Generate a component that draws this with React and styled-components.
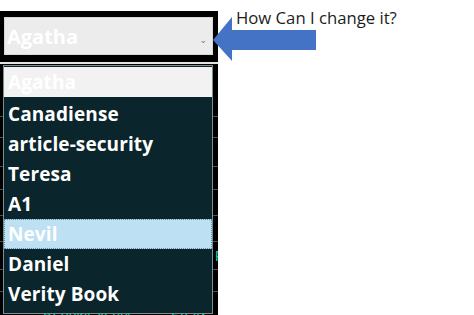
import { createGlobalStyle, styled } from "styled-components"

const GlobalStyle = createGlobalStyle`
  html, body {
    margin: 0;
    padding: 0;
    background: #fff;
  }
`

const options = [
  "Agatha",
  "Canadiense",
  "article-security",
  "Teresa",
  "A1",
  "Nevil",
  "Daniel",
  "Verity Book",
]

const rowHeights = [53, 21, 29, 23, 26, 26, 28, 22]

export default function App() {
  return (
    <>
      <GlobalStyle />
      <Page>
        <LeftCol>
          <SelectFrame>
            <SelectBox>
              <SelectValue>Agatha</SelectValue>
              <Chevron>⌄</Chevron>
            </SelectBox>
          </SelectFrame>
          <Rule />
          <Panel>
            {rowHeights.map((h, i) => (
              <TableRow key={i} $h={h}>
                {i === 6 && <TealText $right>F</TealText>}
              </TableRow>
            ))}
            <BottomRow>
              <Dash />
              <TealText>Regular Verity</TealText>
              <Dash />
              <TealText>Prefix</TealText>
            </BottomRow>
            <Dropdown>
              {options.map((name, i) => (
                <Option key={name} $first={i === 0} $active={name === "Nevil"}>
                  {name}
                </Option>
              ))}
            </Dropdown>
          </Panel>
        </LeftCol>
        <Note>How Can I change it?</Note>
        <Arrow viewBox="0 0 104 44" width="104" height="44">
          <polygon
            points="0,23 19,0 19,13 103,13 103,33 19,33 19,44"
            fill="#4472c4"
          />
        </Arrow>
      </Page>
    </>
  )
}

const Page = styled.div`
  position: relative;
  display: flex;
  width: 474px;
  height: 315px;
  overflow: hidden;
  background: #fff;
`

const LeftCol = styled.div`
  display: flex;
  flex-direction: column;
  width: 218px;
  padding-top: 11px;
  box-sizing: border-box;
`

const SelectFrame = styled.div`
  background: #000;
  padding: 6px 5px 7px 4px;
`

const SelectBox = styled.div`
  display: flex;
  align-items: center;
  justify-content: space-between;
  height: 38px;
  padding: 0 5px 0 2px;
  background: #ececec;
  border: 1px solid #d8d8d8;
  box-sizing: border-box;
`

const SelectValue = styled.span`
  font-family: "Open Sans", "Noto Sans", sans-serif;
  font-weight: 700;
  font-size: 20px;
  color: #fff;
`

const Chevron = styled.span`
  align-self: flex-end;
  margin-bottom: 9px;
  font-family: "DejaVu Sans", sans-serif;
  font-size: 9px;
  line-height: 1;
  color: #777;
`

const Rule = styled.div`
  height: 2px;
  background: #e4e4e4;
`

const Panel = styled.div`
  position: relative;
  flex: 1;
  background: #000;
  overflow: hidden;
`

const TableRow = styled.div`
  position: relative;
  height: ${(p) => p.$h}px;
  border-bottom: 1px solid #4c5356;
  box-sizing: border-box;
`

const BottomRow = styled.div`
  display: flex;
  align-items: center;
  gap: 6px;
  padding: 13px 0 0 27px;
`

const Dash = styled.span`
  width: 10px;
  height: 2px;
  background: #a9b4b6;
  &:nth-of-type(3) {
    margin-left: 18px;
  }
`

const TealText = styled.span`
  font-family: "Liberation Sans", Arial, sans-serif;
  font-size: 14px;
  line-height: 16px;
  color: #1ec9a0;
  ${(p) =>
    p.$right &&
    `
    position: absolute;
    left: 215px;
    top: 6px;
  `}
`

const Dropdown = styled.div`
  position: absolute;
  top: 1px;
  left: 3px;
  width: 210px;
  padding: 1px 0 4px;
  background: #0a252b;
  border: 1px solid #7f8e91;
  box-sizing: border-box;
`

const Option = styled.div`
  display: flex;
  align-items: center;
  height: 30px;
  margin-bottom: ${(p) => (p.$first ? 2 : 0)}px;
  padding-left: 3px;
  font-family: "Open Sans", "Noto Sans", sans-serif;
  font-weight: 700;
  font-size: 19px;
  letter-spacing: 0.1px;
  color: #fff;
  background: ${(p) => (p.$first ? "#f2f2f2" : p.$active ? "#bde0f2" : "transparent")};
  border: 1px dotted ${(p) => (p.$active ? "#5d8fa6" : "transparent")};
  box-sizing: border-box;
`

const Note = styled.div`
  padding: 6px 0 0 18px;
  font-family: "Open Sans", "Noto Sans", sans-serif;
  font-size: 16.7px;
  color: #1c1c1c;
  white-space: nowrap;
`

const Arrow = styled.svg`
  position: absolute;
  left: 213px;
  top: 17px;
`
